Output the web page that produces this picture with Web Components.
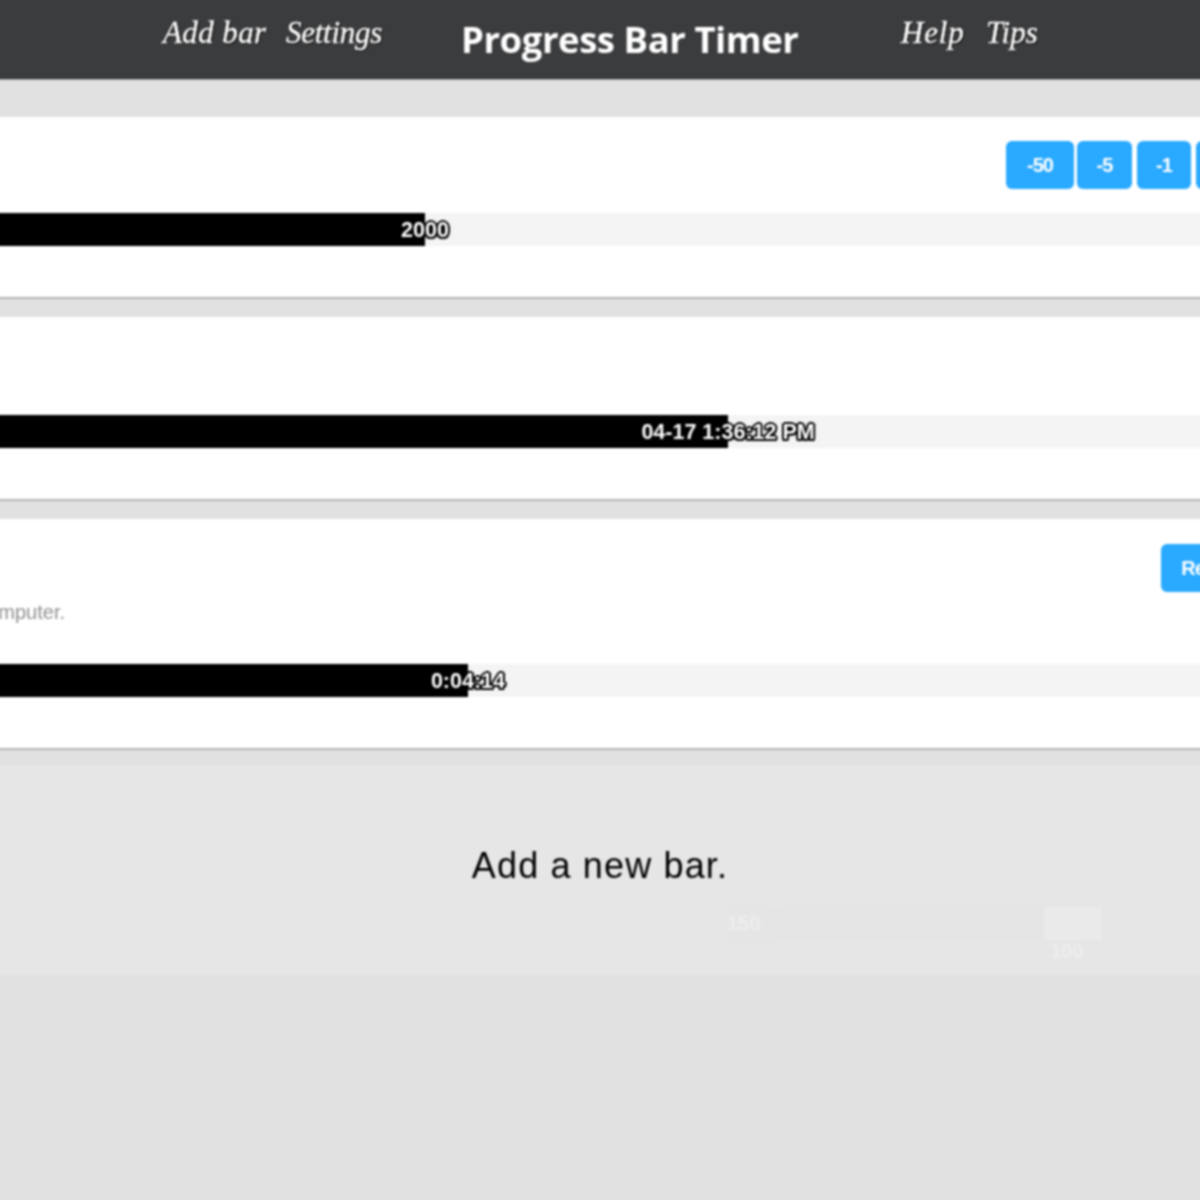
<!DOCTYPE html>
<html>
<head>
<meta charset="utf-8">
<title>Progress Bar Timer</title>
<style>
html, body { margin: 0; height: 100%; background: #e1e1e1; overflow: hidden; }
body { font-family: "Liberation Sans", Arial, sans-serif; }
</style>
</head>
<body>
<app-page>
    <app-header>
        <nav-link slot="left" style="width:103px;letter-spacing:.4px">Add bar</nav-link>
        <nav-link slot="left" style="width:96px;letter-spacing:-.25px">Settings</nav-link>
        <nav-link slot="right" style="width:65px;letter-spacing:.8px">Help</nav-link>
        <nav-link slot="right" style="width:51px">Tips</nav-link>
    </app-header>
    <bar-card top="24" bottom="51" gap="24">
        <bar-button slot="actions" style="width:68px;margin-left:1010px">-50</bar-button>
        <bar-button slot="actions" style="width:55px;margin-left:3px">-5</bar-button>
        <bar-button slot="actions" style="width:54px;margin-left:5px">-1</bar-button>
        <bar-button slot="actions" style="width:54px;margin-left:5px"></bar-button>
        <progress-track percent="35.51" label="2000"></progress-track>
    </bar-card>
    <bar-card top="98" bottom="51" gap="0">
        <progress-track percent="60.6" label="04-17 1:36:12 PM"></progress-track>
    </bar-card>
    <bar-card top="25" bottom="51" gap="0">
        <bar-button slot="actions" style="width:90px;margin-left:1165px">Reset</bar-button>
        <bar-note slot="note">computer.</bar-note>
        <progress-track percent="39.07" label="0:04:14"></progress-track>
    </bar-card>
    <add-bar-panel></add-bar-panel>
</app-page>

<script>
// page is 4px bigger than the window on each side so the blur has no faded edge
class AppPage extends HTMLElement {
    constructor() {
        super();
        this.attachShadow({ mode: 'open' });
        this.shadowRoot.innerHTML = `
            <style>
                :host {
                    display: block;
                    width: 1208px;
                    height: 1208px;
                    margin: -4px;
                    overflow: hidden;
                    background: #e1e1e1;
                    filter: blur(0.9px);
                }
            </style>
            <slot></slot>
        `;
    }
}

class AppHeader extends HTMLElement {
    constructor() {
        super();
        this.attachShadow({ mode: 'open' });
        this.shadowRoot.innerHTML = `
            <style>
                :host {
                    display: flex;
                    box-sizing: border-box;
                    height: 83px;
                    padding: 4px 0 0 167px;
                    background: #3b3c3e;
                    border-bottom: 1px solid #2c2c2c;
                    box-shadow: 0 1px 1px #b5b5b5;
                    margin-bottom: 38px;
                }
                .group { display: flex; gap: 20px; height: 66px; align-items: center; }
                h1 {
                    margin: 0 103px 0 79px;
                    width: 337px;
                    font: 700 36.5px/79px "Open Sans", sans-serif;
                    letter-spacing: -0.45px;
                    color: #fff;
                    white-space: nowrap;
                }
            </style>
            <div class="group"><slot name="left"></slot></div>
            <h1>Progress Bar Timer</h1>
            <div class="group"><slot name="right"></slot></div>
        `;
    }
}

class NavLink extends HTMLElement {
    constructor() {
        super();
        this.attachShadow({ mode: 'open' });
        this.shadowRoot.innerHTML = `
            <style>
                :host {
                    display: block;
                    font: italic 31px/40px "Liberation Serif", serif;
                    color: #fff;
                    white-space: nowrap;
                    -webkit-text-stroke: 0.4px #fff;
                    text-shadow: 0 0 2px #000, 1px 1px 1px #000;
                }
            </style>
            <slot></slot>
        `;
    }
}

class BarCard extends HTMLElement {
    constructor() {
        super();
        this.attachShadow({ mode: 'open' });
        this.shadowRoot.innerHTML = `
            <style>
                :host {
                    display: block;
                    background: #fff;
                    border-bottom: 2px solid #b4b4b4;
                    margin-bottom: 18px;
                }
                .actions { display: flex; }
            </style>
            <div class="actions"><slot name="actions"></slot></div>
            <slot name="note"></slot>
            <slot></slot>
        `;
    }

    connectedCallback() {
        this.style.paddingTop = this.getAttribute('top') + 'px';
        this.style.paddingBottom = this.getAttribute('bottom') + 'px';
        const actions = this.shadowRoot.querySelector('.actions');
        actions.style.marginBottom = this.getAttribute('gap') + 'px';
    }
}

class BarButton extends HTMLElement {
    constructor() {
        super();
        this.attachShadow({ mode: 'open' });
        this.shadowRoot.innerHTML = `
            <style>
                :host {
                    display: flex;
                    flex: none;
                    box-sizing: border-box;
                    height: 48px;
                    align-items: center;
                    justify-content: center;
                    background: #29a9ff;
                    border-radius: 6px;
                    color: #fff;
                    font: 700 20px "Liberation Sans", Arial, sans-serif;
                    letter-spacing: -1px;
                    white-space: nowrap;
                }
            </style>
            <slot></slot>
        `;
    }
}

class BarNote extends HTMLElement {
    constructor() {
        super();
        this.attachShadow({ mode: 'open' });
        this.shadowRoot.innerHTML = `
            <style>
                :host {
                    display: flex;
                    justify-content: flex-end;
                    width: 69px;
                    height: 64px;
                    padding-top: 8px;
                    font: 20px/24px "Liberation Sans", Arial, sans-serif;
                    color: #8f8f8f;
                    white-space: nowrap;
                }
            </style>
            <slot></slot>
        `;
    }
}

class ProgressTrack extends HTMLElement {
    constructor() {
        super();
        this.attachShadow({ mode: 'open' });
        this.shadowRoot.innerHTML = `
            <style>
                :host { display: block; height: 33px; background: #f4f4f4; }
                .fill { position: relative; height: 100%; background: #000; }
                .label {
                    position: absolute;
                    top: 0;
                    right: 0;
                    transform: translateX(50%);
                    font: 700 21.5px/34px "Liberation Sans", Arial, sans-serif;
                    color: #fff;
                    white-space: nowrap;
                    text-shadow: 2px 0 0 #000, -2px 0 0 #000, 0 2px 0 #000, 0 -2px 0 #000,
                        1.5px 1.5px 0 #000, -1.5px 1.5px 0 #000, 1.5px -1.5px 0 #000, -1.5px -1.5px 0 #000;
                }
            </style>
            <div class="fill"><span class="label"></span></div>
        `;
    }

    connectedCallback() {
        this.shadowRoot.querySelector('.fill').style.width = this.getAttribute('percent') + '%';
        this.shadowRoot.querySelector('.label').textContent = this.getAttribute('label');
    }
}

class AddBarPanel extends HTMLElement {
    constructor() {
        super();
        this.attachShadow({ mode: 'open' });
        this.shadowRoot.innerHTML = `
            <style>
                :host {
                    display: block;
                    box-sizing: border-box;
                    height: 210px;
                    margin-top: -3px;
                    padding-top: 81px;
                    background: #e6e6e6;
                    color: #000;
                }
                h2 {
                    margin: 0;
                    font: 400 36px/40px "Liberation Sans", Arial, sans-serif;
                    letter-spacing: 1.15px;
                    text-align: center;
                }
                .ghost {
                    display: flex;
                    margin: 21px 0 0 684px;
                    height: 33px;
                    width: 364px;
                    background: linear-gradient(to right, #e6e6e6, #e5e5e5 60%);
                    font: 700 20px/33px "Liberation Sans", Arial, sans-serif;
                    color: #ededed;
                }
                .value { margin-left: 47px; }
                .stop { flex: none; margin-left: auto; transform: translateX(58px); width: 58px; background: #eaeaea; }
                .stop span { display: block; margin: 27px 0 0 6px; line-height: 34px; }
            </style>
            <h2>Add a new bar.</h2>
            <div class="ghost">
                <span class="value">150</span>
                <div class="stop"><span>100</span></div>
            </div>
        `;
    }
}

customElements.define('app-page', AppPage);
customElements.define('app-header', AppHeader);
customElements.define('nav-link', NavLink);
customElements.define('bar-card', BarCard);
customElements.define('bar-button', BarButton);
customElements.define('bar-note', BarNote);
customElements.define('progress-track', ProgressTrack);
customElements.define('add-bar-panel', AddBarPanel);
</script>
</body>
</html>
